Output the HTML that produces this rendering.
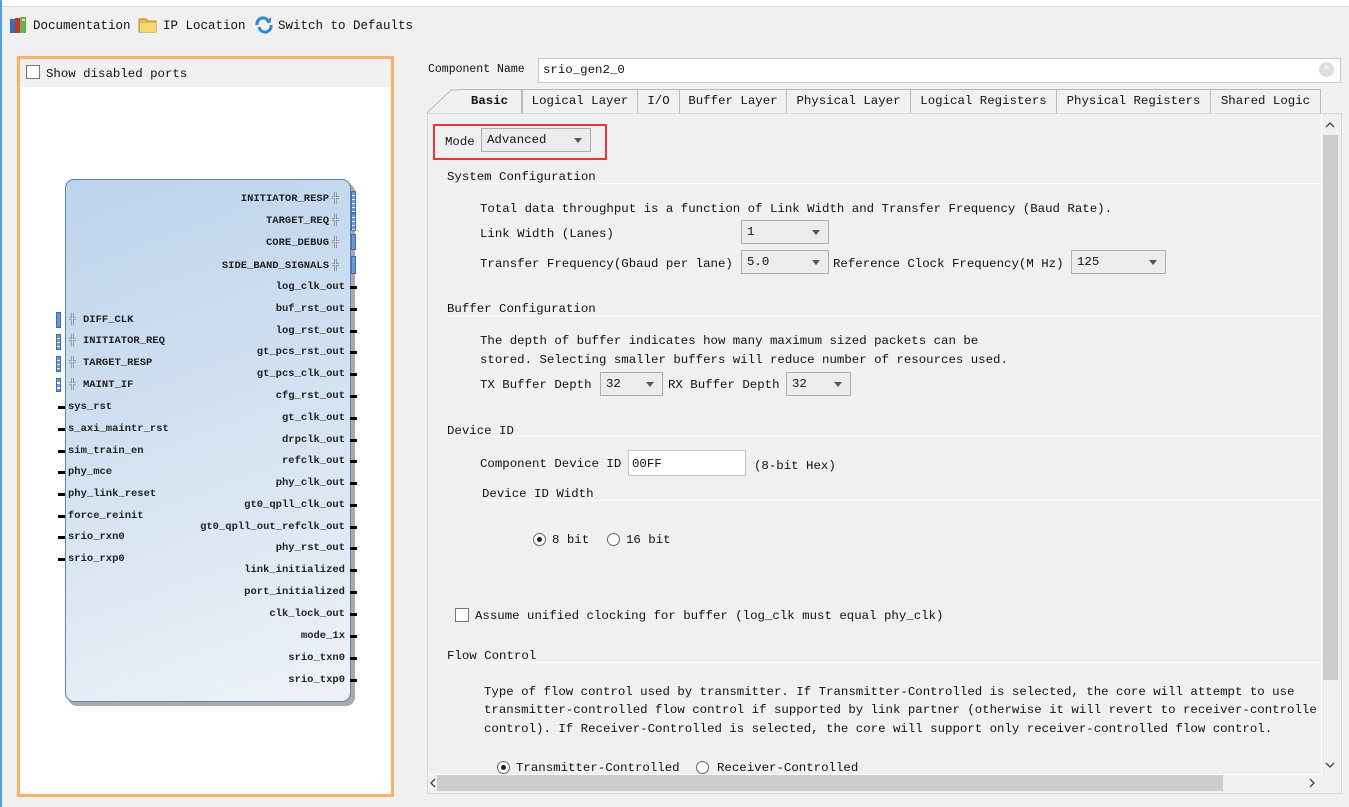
<!DOCTYPE html>
<html><head><meta charset="utf-8"><style>
*{box-sizing:border-box}
body{margin:0;width:1349px;height:807px;background:#f0f0f0;position:relative;overflow:hidden;font-family:"Liberation Mono","Noto Sans CJK SC",monospace;font-size:12px;color:#111}
.a{position:absolute}
.t{position:absolute;white-space:pre;line-height:14px;font-size:12.4px}
.s{position:absolute;white-space:pre;line-height:12px;font-size:10.5px;font-weight:bold;color:#222}
.r{text-align:right;width:300px}
.pin{position:absolute;width:7px;height:3px;background:#000}
.dd{position:absolute;background:#ececec;border:1px solid #adadad;height:24px;font-size:12.4px;line-height:22px;padding-left:5px}
.dd:after{content:"";position:absolute;right:8px;top:9px;border-left:4px solid transparent;border-right:4px solid transparent;border-top:5px solid #555}
.hr{position:absolute;height:1px;background:#c8c8c8;border-bottom:1px solid #fff}
.cb{position:absolute;width:14px;height:14px;border:1px solid #777;background:#fff}
.rad{position:absolute;width:13px;height:13px;border:1px solid #666;border-radius:50%;background:#fff}
.tab{position:absolute;top:89px;height:24px;border:1px solid #bbb;border-bottom:none;border-left:none;background:#f0f0f0;line-height:22px;font-size:12.4px;text-align:center}
.gp{position:absolute;color:#888;font-size:11px;line-height:12px}
.bus{position:absolute;width:5px;background:#6b9ad0;border:1px solid #3b6ea8}
</style></head><body>
<div class="a" style="left:0;top:0;width:1349px;height:7px;background:#fff;border-bottom:1px solid #dcdcdc"></div>
<div class="a" style="left:0;top:0;width:2px;height:807px;background:#4aa3e0"></div>
<svg class="a" style="left:9px;top:16px" width="21" height="18"><rect x="1" y="3" width="5" height="14" fill="#3a6fb8"/><rect x="6" y="2" width="5" height="15" fill="#c0392b"/><rect x="11" y="1" width="6" height="16" fill="#6ab04c"/><rect x="13" y="3" width="3" height="2" fill="#d4f0b0"/></svg>
<div class="t" style="left:33px;top:19px;font-size:12.5px">Documentation</div>
<svg class="a" style="left:138px;top:16px" width="20" height="18"><path d="M1 3h7l2 2h8v11H1z" fill="#e9b949" stroke="#b98a20"/><rect x="2" y="7" width="16" height="9" fill="#f7d774"/></svg>
<div class="t" style="left:163px;top:19px;font-size:12.5px">IP Location</div>
<svg class="a" style="left:254px;top:16px" width="20" height="18"><path d="M3 9a6 6 0 0 1 12-2" fill="none" stroke="#2a8ad8" stroke-width="3"/><path d="M17 9a6 6 0 0 1-12 2" fill="none" stroke="#2a8ad8" stroke-width="3"/><path d="M12 6l5 0 0-5z" fill="#2a8ad8"/></svg>
<div class="t" style="left:278px;top:19px;font-size:12.5px">Switch to Defaults</div>
<div class="a" style="left:17px;top:56px;width:377px;height:741px;border:3px solid #f7b267;background:#fff"></div>
<div class="a" style="left:20px;top:59px;width:371px;height:28px;background:#f0f0f0"></div>
<div class="cb" style="left:26px;top:65px"></div>
<div class="t" style="left:46px;top:67px">Show disabled ports</div>
<div class="a" style="left:68px;top:183px;width:287px;height:523px;background:#aaa;border-radius:9px"></div>
<div class="a" style="left:65px;top:179px;width:286px;height:523px;border:1px solid #5b84b8;border-radius:9px;background:linear-gradient(160deg,#bcd3ec 0%,#d4e2f1 50%,#eef2f7 100%)"></div>
<div class="bus" style="left:351px;top:191px;height:22px;background:repeating-linear-gradient(#6b9ad0 0 3px,#fff 3px 4px)"></div>
<div class="bus" style="left:351px;top:213px;height:18px;background:repeating-linear-gradient(#6b9ad0 0 3px,#fff 3px 4px)"></div>
<div class="bus" style="left:351px;top:234px;height:16px"></div>
<div class="bus" style="left:351px;top:256px;height:18px"></div>
<div class="bus" style="left:56px;top:312px;height:16px"></div>
<div class="bus" style="left:56px;top:334px;height:16px;background:repeating-linear-gradient(#6b9ad0 0 3px,#fff 3px 4px)"></div>
<div class="bus" style="left:56px;top:356px;height:16px;background:repeating-linear-gradient(#6b9ad0 0 3px,#fff 3px 4px)"></div>
<div class="bus" style="left:56px;top:378px;height:14px;background:repeating-linear-gradient(#6b9ad0 0 3px,#fff 3px 5px)"></div>
<div class="s r" style="left:29px;top:193px">INITIATOR_RESP</div><div class="gp" style="left:332px;top:193px">╬</div>
<div class="s r" style="left:29px;top:215px">TARGET_REQ</div><div class="gp" style="left:332px;top:215px">╬</div>
<div class="s r" style="left:29px;top:237px">CORE_DEBUG</div><div class="gp" style="left:332px;top:237px">╬</div>
<div class="s r" style="left:29px;top:260px">SIDE_BAND_SIGNALS</div><div class="gp" style="left:332px;top:260px">╬</div>
<div class="s r" style="left:45px;top:281px">log_clk_out</div><div class="pin" style="left:350px;top:286px"></div>
<div class="s r" style="left:45px;top:303px">buf_rst_out</div><div class="pin" style="left:350px;top:308px"></div>
<div class="s r" style="left:45px;top:325px">log_rst_out</div><div class="pin" style="left:350px;top:330px"></div>
<div class="s r" style="left:45px;top:346px">gt_pcs_rst_out</div><div class="pin" style="left:350px;top:351px"></div>
<div class="s r" style="left:45px;top:368px">gt_pcs_clk_out</div><div class="pin" style="left:350px;top:373px"></div>
<div class="s r" style="left:45px;top:390px">cfg_rst_out</div><div class="pin" style="left:350px;top:395px"></div>
<div class="s r" style="left:45px;top:412px">gt_clk_out</div><div class="pin" style="left:350px;top:417px"></div>
<div class="s r" style="left:45px;top:434px">drpclk_out</div><div class="pin" style="left:350px;top:439px"></div>
<div class="s r" style="left:45px;top:455px">refclk_out</div><div class="pin" style="left:350px;top:460px"></div>
<div class="s r" style="left:45px;top:477px">phy_clk_out</div><div class="pin" style="left:350px;top:482px"></div>
<div class="s r" style="left:45px;top:499px">gt0_qpll_clk_out</div><div class="pin" style="left:350px;top:504px"></div>
<div class="s r" style="left:45px;top:521px">gt0_qpll_out_refclk_out</div><div class="pin" style="left:350px;top:526px"></div>
<div class="s r" style="left:45px;top:542px">phy_rst_out</div><div class="pin" style="left:350px;top:547px"></div>
<div class="s r" style="left:45px;top:564px">link_initialized</div><div class="pin" style="left:350px;top:569px"></div>
<div class="s r" style="left:45px;top:586px">port_initialized</div><div class="pin" style="left:350px;top:591px"></div>
<div class="s r" style="left:45px;top:608px">clk_lock_out</div><div class="pin" style="left:350px;top:613px"></div>
<div class="s r" style="left:45px;top:630px">mode_1x</div><div class="pin" style="left:350px;top:635px"></div>
<div class="s r" style="left:45px;top:652px">srio_txn0</div><div class="pin" style="left:350px;top:657px"></div>
<div class="s r" style="left:45px;top:674px">srio_txp0</div><div class="pin" style="left:350px;top:679px"></div>
<div class="gp" style="left:69px;top:314px">╬</div><div class="s" style="left:83px;top:314px">DIFF_CLK</div>
<div class="gp" style="left:69px;top:335px">╬</div><div class="s" style="left:83px;top:335px">INITIATOR_REQ</div>
<div class="gp" style="left:69px;top:357px">╬</div><div class="s" style="left:83px;top:357px">TARGET_RESP</div>
<div class="gp" style="left:69px;top:379px">╬</div><div class="s" style="left:83px;top:379px">MAINT_IF</div>
<div class="pin" style="left:58px;top:406px"></div><div class="s" style="left:68px;top:401px">sys_rst</div>
<div class="pin" style="left:58px;top:428px"></div><div class="s" style="left:68px;top:423px">s_axi_maintr_rst</div>
<div class="pin" style="left:58px;top:450px"></div><div class="s" style="left:68px;top:445px">sim_train_en</div>
<div class="pin" style="left:58px;top:471px"></div><div class="s" style="left:68px;top:466px">phy_mce</div>
<div class="pin" style="left:58px;top:493px"></div><div class="s" style="left:68px;top:488px">phy_link_reset</div>
<div class="pin" style="left:58px;top:515px"></div><div class="s" style="left:68px;top:510px">force_reinit</div>
<div class="pin" style="left:58px;top:536px"></div><div class="s" style="left:68px;top:531px">srio_rxn0</div>
<div class="pin" style="left:58px;top:558px"></div><div class="s" style="left:68px;top:553px">srio_rxp0</div>
<div class="t" style="left:428px;top:63px;font-size:11.5px">Component Name</div>
<div class="a" style="left:538px;top:58px;width:803px;height:25px;background:#fff;border:1px solid #c8c8c8"></div>
<div class="t" style="left:543px;top:63px">srio_gen2_0</div>
<div class="a" style="left:1319px;top:62px;width:15px;height:15px;border-radius:50%;background:#ddd;color:#fff;font-size:11px;line-height:15px;text-align:center">×</div>
<div class="a" style="left:427px;top:113px;width:915px;height:681px;background:#f0f0f0;border:1px solid #d8d8d8"></div>
<div class="a" style="left:428px;top:114px;width:894px;height:661px;border-right:1px solid #fff;border-bottom:1px solid #fff"></div>
<svg class="a" style="left:427px;top:89px" width="40" height="25"><path d="M0 24L24 1H40" fill="none" stroke="#bbb"/></svg>
<div class="tab" style="left:458px;width:64px;font-weight:bold">Basic</div>
<div class="tab" style="left:522px;width:116px;border-left:1px solid #bbb">Logical Layer</div>
<div class="tab" style="left:638px;width:42px">I/O</div>
<div class="tab" style="left:680px;width:107px">Buffer Layer</div>
<div class="tab" style="left:787px;width:124px">Physical Layer</div>
<div class="tab" style="left:911px;width:146px">Logical Registers</div>
<div class="tab" style="left:1057px;width:154px">Physical Registers</div>
<div class="tab" style="left:1211px;width:110px">Shared Logic</div>
<div class="a" style="left:1323px;top:135px;width:15px;height:545px;background:#cdcdcd"></div>
<svg class="a" style="left:1325px;top:121px" width="10" height="8"><path d="M1 6L5 2L9 6" fill="none" stroke="#444" stroke-width="1.3"/></svg>
<svg class="a" style="left:1325px;top:761px" width="10" height="8"><path d="M1 2L5 6L9 2" fill="none" stroke="#444" stroke-width="1.3"/></svg>
<div class="a" style="left:437px;top:775px;width:786px;height:16px;background:#cdcdcd"></div>
<svg class="a" style="left:429px;top:778px" width="8" height="10"><path d="M6 1L2 5L6 9" fill="none" stroke="#444" stroke-width="1.3"/></svg>
<svg class="a" style="left:1308px;top:778px" width="8" height="10"><path d="M2 1L6 5L2 9" fill="none" stroke="#444" stroke-width="1.3"/></svg>
<div class="a" style="left:433px;top:124px;width:174px;height:36px;border:2px solid #e53935"></div>
<div class="t" style="left:445px;top:135px">Mode</div>
<div class="dd" style="left:481px;top:128px;width:110px">Advanced</div>
<div class="t" style="left:447px;top:170px">System Configuration</div><div class="hr" style="left:447px;top:183px;width:875px"></div>
<div class="t" style="left:480px;top:202px">Total data throughput is a function of Link Width and Transfer Frequency (Baud Rate).</div>
<div class="t" style="left:480px;top:227px">Link Width (Lanes)</div>
<div class="dd" style="left:741px;top:220px;width:88px">1</div>
<div class="t" style="left:480px;top:257px">Transfer Frequency(Gbaud per lane)</div>
<div class="dd" style="left:741px;top:250px;width:88px">5.0</div>
<div class="t" style="left:833px;top:257px">Reference Clock Frequency(M Hz)</div>
<div class="dd" style="left:1071px;top:250px;width:95px">125</div>
<div class="t" style="left:447px;top:302px">Buffer Configuration</div><div class="hr" style="left:447px;top:315px;width:875px"></div>
<div class="t" style="left:480px;top:334px">The depth of buffer indicates how many maximum sized packets can be</div>
<div class="t" style="left:480px;top:353px">stored. Selecting smaller buffers will reduce number of resources used.</div>
<div class="t" style="left:480px;top:378px">TX Buffer Depth</div>
<div class="dd" style="left:600px;top:372px;width:63px">32</div>
<div class="t" style="left:668px;top:378px">RX Buffer Depth</div>
<div class="dd" style="left:786px;top:372px;width:65px">32</div>
<div class="t" style="left:447px;top:424px">Device ID</div><div class="hr" style="left:447px;top:436px;width:875px"></div>
<div class="t" style="left:480px;top:457px">Component Device ID</div>
<div class="a" style="left:628px;top:450px;width:118px;height:26px;background:#fff;border:1px solid #c8c8c8"></div>
<div class="t" style="left:632px;top:457px">00FF</div>
<div class="t" style="left:754px;top:459px">(8-bit Hex)</div>
<div class="t" style="left:482px;top:487px">Device ID Width</div><div class="hr" style="left:482px;top:500px;width:840px"></div>
<div class="rad" style="left:533px;top:533px"></div><div class="a" style="left:537px;top:537px;width:5px;height:5px;border-radius:50%;background:#222"></div>
<div class="t" style="left:552px;top:533px">8 bit</div>
<div class="rad" style="left:607px;top:533px"></div>
<div class="t" style="left:626px;top:533px">16 bit</div>
<div class="cb" style="left:455px;top:608px"></div>
<div class="t" style="left:475px;top:609px">Assume unified clocking for buffer (log_clk must equal phy_clk)</div>
<div class="t" style="left:447px;top:649px">Flow Control</div><div class="hr" style="left:447px;top:662px;width:875px"></div>
<div class="a" style="left:428px;top:680px;width:894px;height:60px;overflow:hidden">
<div class="t" style="left:56px;top:5px">Type of flow control used by transmitter. If Transmitter-Controlled is selected, the core will attempt to use</div>
<div class="t" style="left:56px;top:23px">transmitter-controlled flow control if supported by link partner (otherwise it will revert to receiver-controlle</div>
<div class="t" style="left:56px;top:42px">control). If Receiver-Controlled is selected, the core will support only receiver-controlled flow control.</div>
</div>
<div class="a" style="left:428px;top:755px;width:894px;height:19px;overflow:hidden">
<div class="rad" style="left:69px;top:6px"></div><div class="a" style="left:73px;top:10px;width:5px;height:5px;border-radius:50%;background:#222"></div>
<div class="t" style="left:88px;top:6px">Transmitter-Controlled</div>
<div class="rad" style="left:268px;top:6px"></div>
<div class="t" style="left:289px;top:6px">Receiver-Controlled</div>
</div>
</body></html>
